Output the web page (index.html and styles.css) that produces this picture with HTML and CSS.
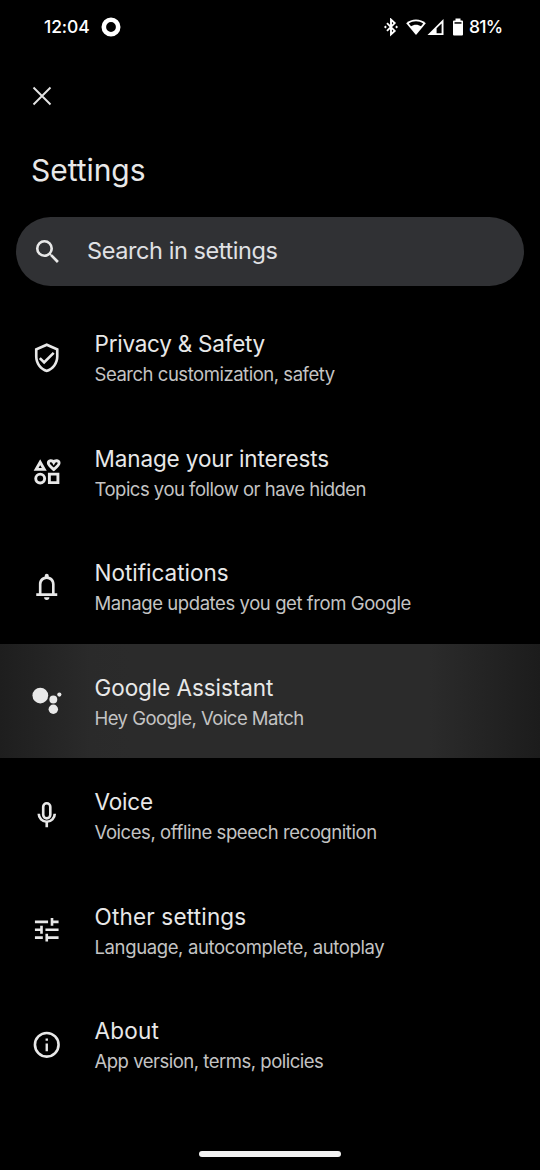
FILE: index.html
```
<!DOCTYPE html>
<html lang="en">
<head>
<meta charset="utf-8">
<title>Settings</title>
<link rel="stylesheet" href="styles.css">
</head>
<body>
<div class="screen">
  <header class="status">
    <span class="clock">12:04</span>
    <svg class="ring" viewBox="0 0 20 20"><circle cx="10" cy="10" r="7.200" fill="none" stroke="#fff" stroke-width="4.600"/></svg>
    <svg class="status-icons" viewBox="0 0 80 20">
      <path d="M3 5.200 10.700 12.900 7 16.400V1.600L10.700 5.100 3 12.800" fill="none" stroke="#fff" stroke-width="1.900"/>
      <path d="M0 9l1.400-1.400L2.800 9l-1.400 1.400zM11.200 9l1.400-1.400L14 9l-1.400 1.400z" fill="#fff"/>
      <path d="M32 17 22.200 5.200C27.500.4 36.500.4 41.800 5.200Z" fill="#fff"/>
      <path d="M24.800 5.500C29 2.400 35 2.400 39.200 5.500L37 8.300C34.200 6.100 29.800 6.100 27 8.300Z" fill="#000"/>
      <path d="M59.500 1v16h-16z" fill="#fff"/><path d="M57.600 5.400v9.900H52.600V10.200z" fill="#000"/>
      <path d="M71.500 .5h5v2H78q1 0 1 1v13q0 1-1 1h-8q-1 0-1-1v-13q0-1 1-1h1.500z" fill="#fff"/>
      <path d="M70.500 4.200h7v1.500h-7z" fill="#000"/>
    </svg>
    <span class="percent">81%</span>
  </header>

  <svg class="close" viewBox="0 0 20 20"><path d="M1.500 1.500l17 17M18.500 1.500l-17 17"/></svg>
  <h1 class="heading">Settings</h1>

  <div class="search">
    <svg class="icon" viewBox="0 0 24 24"><path d="M15.500 14h-.79l-.28-.27A6.470 6.470 0 0 0 16 9.500 6.500 6.500 0 1 0 9.500 16c1.610 0 3.090-.59 4.230-1.570l.27.28v.79l5 4.990L20.490 19zm-6 0a4.500 4.500 0 1 1 0-9 4.500 4.500 0 0 1 0 9z"/></svg>
    <span class="search-text">Search in settings</span>
  </div>

  <main class="list">
    <section class="row">
      <svg class="icon" viewBox="0 0 24 24"><path d="M12 1 3 5v6c0 5.550 3.840 10.740 9 12 5.160-1.260 9-6.450 9-12V5zm7 10c0 4.520-2.980 8.690-7 9.930-4.020-1.240-7-5.410-7-9.930V6.300l7-3.110 7 3.110zM7.410 11.590 6 13l4 4 8-8-1.410-1.420L10 14.170z"/></svg>
      <div class="text"><h2 class="t1">Privacy &amp; Safety</h2><p class="s1">Search customization, safety</p></div>
    </section>
    <section class="row">
      <svg class="icon" viewBox="0 0 24 24"><g class="outline bold"><path d="M7 4.700 10.100 10.200H3.900z"/><path d="M17.300 10.300C14.400 8 13.200 7 13.200 5.400c0-2.100 3-2.500 4.100-.5 1.100-2 4.100-1.600 4.100.5 0 1.600-1.200 2.600-4.100 4.900z"/><circle cx="7" cy="17.200" r="3.400"/><path d="M14 13.800h6.500v6.500H14z"/></g></svg>
      <div class="text"><h2 class="t2">Manage your interests</h2><p class="s2">Topics you follow or have hidden</p></div>
    </section>
    <section class="row">
      <svg class="icon" viewBox="0 0 24 24"><path d="M4 19v-2h2v-7c0-2.800 1.700-5.200 4.500-5.800v-.7a1.500 1.500 0 0 1 3 0v.7C16.300 4.800 18 7.200 18 10v7h2v2zm8 3a2 2 0 0 1-2-2h4a2 2 0 0 1-2 2zm-4-5h8v-7a4 4 0 0 0-8 0z"/></svg>
      <div class="text"><h2 class="t3">Notifications</h2><p class="s3">Manage updates you get from Google</p></div>
    </section>
    <section class="row selected">
      <svg class="icon" viewBox="0 0 24 24"><circle cx="7.100" cy="8" r="6"/><circle cx="17" cy="11" r="3"/><circle cx="21.600" cy="7.300" r="1.600"/><circle cx="17" cy="18.500" r="3.600"/></svg>
      <div class="text"><h2 class="t4">Google Assistant</h2><p class="s4">Hey Google, Voice Match</p></div>
    </section>
    <section class="row">
      <svg class="icon" viewBox="0 0 24 24"><g class="outline"><rect x="9.300" y="2.500" width="5.400" height="11.500" rx="2.700"/><path d="M5.900 10.500a6.100 6.100 0 0 0 12.200 0M12 16.500v4.200"/></g></svg>
      <div class="text"><h2 class="t5">Voice</h2><p class="s5">Voices, offline speech recognition</p></div>
    </section>
    <section class="row">
      <svg class="icon" viewBox="0 0 24 24"><g class="outline"><path d="M3 6h10M16 3v6M16 6h5M3 12h5M8 9v6M11 12h10M3 18h6M12 15v6M12 18h9"/></g></svg>
      <div class="text"><h2 class="t6">Other settings</h2><p class="s6">Language, autocomplete, autoplay</p></div>
    </section>
    <section class="row">
      <svg class="icon" viewBox="0 0 24 24"><g class="outline"><circle cx="12" cy="12" r="9"/></g><path d="M11.100 11h1.800v6h-1.800zM11.100 7.200h1.800V9h-1.800z"/></svg>
      <div class="text"><h2 class="t7">About</h2><p class="s7">App version, terms, policies</p></div>
    </section>
  </main>
  <div class="home-bar"></div>
</div>
</body>
</html>
```
FILE: styles.css
```
* { box-sizing: border-box; margin: 0; padding: 0; }
body { background: #000; color: #e8e8e8; font-family: Inter, Roboto, sans-serif; }
.screen { width: 540px; height: 1170px; display: flex; flex-direction: column; overflow: hidden; background: #000; }
.status { height: 54px; flex: none; display: flex; align-items: center; padding: 0 38px 0 44px; color: #fff; line-height: 22px; }
.clock { width: 57px; font-weight: 500; font-size: 17.500px; letter-spacing: -.1px; white-space: nowrap; }
.ring { width: 20px; height: 20px; }
.status-icons { width: 80px; height: 20px; margin: 1px 5px 0 auto; }
.percent { width: 33px; font-weight: 500; font-size: 17.500px; letter-spacing: -.8px; white-space: nowrap; }
.close { width: 20px; height: 20px; margin: 32px 0 0 32px; flex: none; fill: none; stroke: #e3e3e3; stroke-width: 1.900; }
.heading { margin: 44px 0 0 31px; height: 40px; line-height: 40px; font-size: 30px; font-weight: 400; letter-spacing: -.05px; white-space: nowrap; }
.search { margin: 27px 16px 0; height: 69px; flex: none; border-radius: 35px; background: #303134; display: flex; align-items: center; padding-left: 15.500px; }
.icon { width: 31.500px; height: 31.500px; flex: none; fill: #e8e8e8; }
.outline { fill: none; stroke: #e8e8e8; stroke-width: 2; }
.bold { stroke-width: 2.200; }
.search-text { margin-left: 24px; padding-bottom: 2px; font-size: 23.500px; line-height: 30px; letter-spacing: -.42px; color: #e0e1e5; white-space: nowrap; }
.list { margin-top: 14px; flex: none; }
.row { height: 114.500px; display: flex; align-items: center; padding-left: 31px; }
.selected { background: linear-gradient(90deg, #1e1e1e 0, #2a2a2a 90px, #2b2b2b 130px, #2b2b2b 430px, #1c1c1c 100%); }
.text { margin-left: 32px; padding-top: .500px; white-space: nowrap; }
h2 { font-size: 22.500px; line-height: 30px; font-weight: 400; }
p { font-size: 18.500px; line-height: 24px; margin-top: 3px; color: #c4c4c4; }
/* Tracking tuned per label */
.t1 { letter-spacing: -.24px; }
.t2 { letter-spacing: -.12px; }
.t4 { letter-spacing: -.07px; }
.t5 { letter-spacing: -.2px; }
.t6 { letter-spacing: .18px; }
.t7 { letter-spacing: .25px; }
.s1 { letter-spacing: -.47px; }
.s2 { letter-spacing: -.51px; }
.s3 { letter-spacing: -.42px; }
.s4 { letter-spacing: -.53px; }
.s5 { letter-spacing: -.43px; }
.s6 { letter-spacing: -.37px; }
.s7 { letter-spacing: -.49px; }
.home-bar { width: 142px; height: 6px; border-radius: 3px; background: #f2f2f2; margin: 49.500px auto 0; flex: none; }
```
